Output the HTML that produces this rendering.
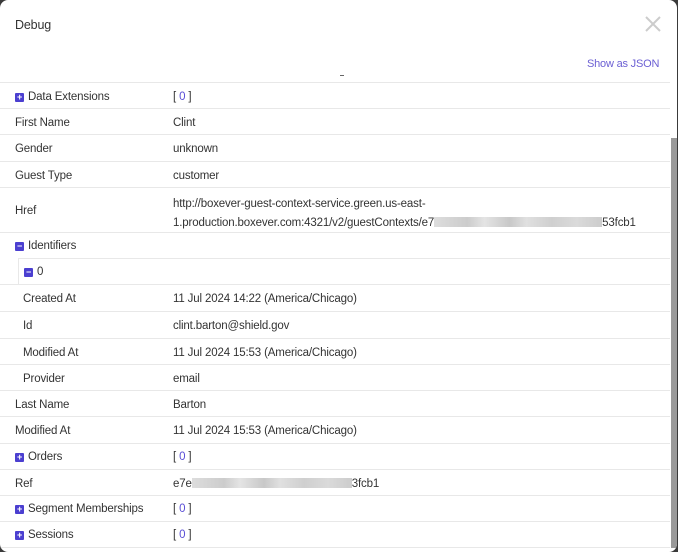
<!DOCTYPE html>
<html><head><style>
html,body{margin:0;padding:0;width:678px;height:550px;overflow:hidden;background:#3a3a3a;}
.m{position:absolute;left:0;top:0;width:677px;height:552px;background:#fff;border-radius:8px;font-family:"Liberation Sans",sans-serif;font-size:11.5px;letter-spacing:-0.15px;color:#333;overflow:hidden}
.t{position:absolute;left:15px;top:18px;font-size:12.5px;}
.x{position:absolute;left:644px;top:15px;}
.j{position:absolute;left:587px;top:58px;color:#6b5fd3;font-size:11px;letter-spacing:-0.2px}
.dash{position:absolute;left:340px;top:75px;width:4px;height:1px;background:#666}
.r{position:absolute;left:0;width:670px;border-top:1px solid #e8e8e8;}
.r span.l,.r span.v{margin-top:1px}
.l{position:absolute;left:15px;}
.v{position:absolute;left:173px;}
.b{display:inline-block;width:9px;height:9px;background:#4b3fd0;border-radius:1px;color:#fff;font-size:9px;line-height:9px;text-align:center;vertical-align:0px;margin-right:4px;font-weight:bold}
.n{color:#5a4fd6}
.sb{position:absolute;left:671px;top:138px;width:6px;height:410px;background:#9a9a9a}
.blur{display:inline-block;height:10px;vertical-align:-1px;background:linear-gradient(90deg,#ddd,#ccc 20%,#e4e4e4 30%,#c8c8c8 45%,#e0e0e0 55%,#cfcfcf 70%,#dadada 85%,#ccc)}
</style></head><body><div class="m">
<div class="t">Debug</div>
<svg class="x" width="18" height="18"><path d="M2 2L16 16M16 2L2 16" stroke="#ccc" stroke-width="2"/></svg>
<div class="j">Show as JSON</div>
<div class="dash"></div>
<div class="r" style="top:82px;height:26px"><span class="l" style="top:7px"><span class="b">+</span>Data Extensions</span><span class="v" style="top:7px">[ <span class="n">0</span> ]</span></div>
<div class="r" style="top:108px;height:26px"><span class="l" style="top:7px">First Name</span><span class="v" style="top:7px">Clint</span></div>
<div class="r" style="top:134px;height:26px"><span class="l" style="top:7px">Gender</span><span class="v" style="top:7px">unknown</span></div>
<div class="r" style="top:161px;height:26px"><span class="l" style="top:7px">Guest Type</span><span class="v" style="top:7px">customer</span></div>
<div class="r" style="top:187px;height:45px"><span class="l" style="top:16px">Href</span><span class="v" style="top:6px;line-height:19px">http://boxever-guest-context-service.green.us-east-<br>1.production.boxever.com:4321/v2/guestContexts/e7<span class="blur" style="width:168px"></span>53fcb1</span></div>
<div class="r" style="top:232px;height:26px"><span class="l" style="top:6px"><span class="b">−</span>Identifiers</span></div>
<div style="position:absolute;left:18px;top:258px;width:1px;height:26px;background:#e8e8e8"></div>
<div class="r" style="top:258px;height:26px;left:18px;width:652px"><span class="l" style="top:6px;left:6px"><span class="b">−</span>0</span></div>
<div class="r" style="top:284px;height:26px"><span class="l" style="top:7px;left:23px">Created At</span><span class="v" style="top:7px">11 Jul 2024 14:22 (America/Chicago)</span></div>
<div class="r" style="top:311px;height:26px"><span class="l" style="top:7px;left:23px">Id</span><span class="v" style="top:7px">clint.barton@shield.gov</span></div>
<div class="r" style="top:338px;height:26px"><span class="l" style="top:7px;left:23px">Modified At</span><span class="v" style="top:7px">11 Jul 2024 15:53 (America/Chicago)</span></div>
<div class="r" style="top:364px;height:26px"><span class="l" style="top:7px;left:23px">Provider</span><span class="v" style="top:7px">email</span></div>
<div class="r" style="top:390px;height:26px"><span class="l" style="top:7px">Last Name</span><span class="v" style="top:7px">Barton</span></div>
<div class="r" style="top:416px;height:26px"><span class="l" style="top:7px">Modified At</span><span class="v" style="top:7px">11 Jul 2024 15:53 (America/Chicago)</span></div>
<div class="r" style="top:443px;height:26px"><span class="l" style="top:6px"><span class="b">+</span>Orders</span><span class="v" style="top:6px">[ <span class="n">0</span> ]</span></div>
<div class="r" style="top:469px;height:26px"><span class="l" style="top:7px">Ref</span><span class="v" style="top:7px">e7e<span class="blur" style="width:160px"></span>3fcb1</span></div>
<div class="r" style="top:495px;height:26px"><span class="l" style="top:6px"><span class="b">+</span>Segment Memberships</span><span class="v" style="top:6px">[ <span class="n">0</span> ]</span></div>
<div class="r" style="top:521px;height:26px"><span class="l" style="top:6px"><span class="b">+</span>Sessions</span><span class="v" style="top:6px">[ <span class="n">0</span> ]</span></div>
<div class="r" style="top:547px;height:4px"></div>
<div class="sb"></div>
</div></body></html>
